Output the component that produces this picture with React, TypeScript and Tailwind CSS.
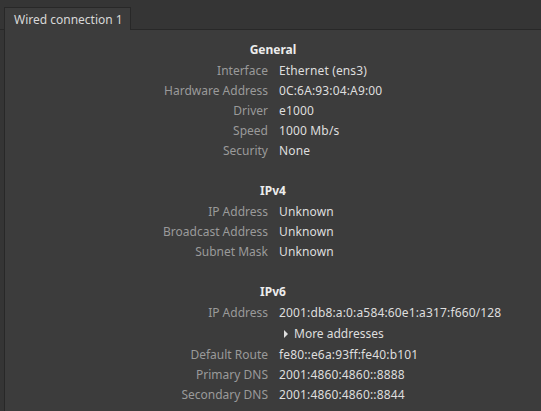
const font = { fontFamily: '"Noto Sans", "Open Sans", sans-serif' };

type Row = { label: string; value: string };

const general: Row[] = [
  { label: 'Interface', value: 'Ethernet (ens3)' },
  { label: 'Hardware Address', value: '0C:6A:93:04:A9:00' },
  { label: 'Driver', value: 'e1000' },
  { label: 'Speed', value: '1000 Mb/s' },
  { label: 'Security', value: 'None' },
];

const ipv4: Row[] = [
  { label: 'IP Address', value: 'Unknown' },
  { label: 'Broadcast Address', value: 'Unknown' },
  { label: 'Subnet Mask', value: 'Unknown' },
];

const ipv6Dns: Row[] = [
  { label: 'Default Route', value: 'fe80::e6a:93ff:fe40:b101' },
  { label: 'Primary DNS', value: '2001:4860:4860::8888' },
  { label: 'Secondary DNS', value: '2001:4860:4860::8844' },
];

function InfoRow({ label, value }: Row) {
  return (
    <div className="grid grid-cols-[263px_1fr] gap-x-[11px] h-5 items-center">
      <span className="text-right text-[#9a9a9a]">{label}</span>
      <span className="text-[#dedede] tracking-[0.15px]">{value}</span>
    </div>
  );
}

function Header({ title }: { title: string }) {
  return (
    <div className="h-5 flex items-center justify-center font-bold text-[#ececec]">
      {title}
    </div>
  );
}

export default function App() {
  return (
    <div className="w-[541px] h-[411px] bg-[#353535] flex flex-col overflow-hidden text-[12px] leading-none" style={font}>
      <div className="h-[30px] flex items-end pl-1 border-b border-[#282828]">
        <div className="h-[23px] w-[127px] bg-[#3c3c3c] border border-b-0 border-[#282828] flex items-center pl-[9px] pt-px text-[#d8d8d8] -mb-px">
          Wired connection 1
        </div>
      </div>
      <div className="flex-1 ml-1 border-l border-[#282828] bg-[#3c3c3c] pt-[10px]">
        <Header title="General" />
        <div className="mt-px">
          {general.map((r) => (
            <InfoRow key={r.label} {...r} />
          ))}
        </div>
        <div className="mt-5">
          <Header title="IPv4" />
          <div className="mt-px">
            {ipv4.map((r) => (
              <InfoRow key={r.label} {...r} />
            ))}
          </div>
        </div>
        <div className="mt-5">
          <Header title="IPv6" />
          <div className="mt-px">
            <InfoRow label="IP Address" value="2001:db8:a:0:a584:60e1:a317:f660/128" />
            <div className="grid grid-cols-[263px_1fr] gap-x-[11px] h-[22px] items-center">
              <span />
              <span className="flex items-center gap-[6px] pl-[5px] text-[#dedede]">
                <svg width="4" height="8" viewBox="0 0 4 8" className="fill-[#dedede]">
                  <path d="M0 0 L4 4 L0 8 Z" />
                </svg>
                More addresses
              </span>
            </div>
            {ipv6Dns.map((r) => (
              <InfoRow key={r.label} {...r} />
            ))}
          </div>
        </div>
      </div>
    </div>
  );
}
